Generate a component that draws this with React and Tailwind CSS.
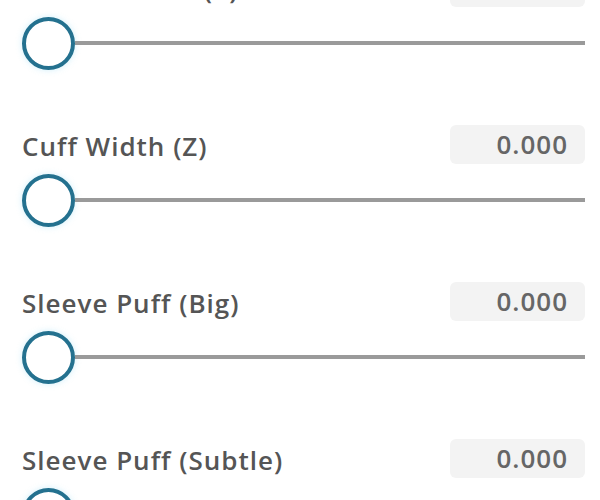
const fields = [
  { label: "Sleeve Width (Y)", value: 0 },
  { label: "Cuff Width (Z)", value: 0 },
  { label: "Sleeve Puff (Big)", value: 0 },
  { label: "Sleeve Puff (Subtle)", value: 0 },
];

function SliderRow({ label, value }) {
  return (
    <div className="mb-[56px]">
      <div className="flex items-center justify-between h-[39px]">
        <span className="text-[26px] font-semibold tracking-[1px] text-[#555555] pt-[4px]">{label}</span>
        <div className="w-[135px] h-[39px] rounded-[6px] bg-[#f3f3f3] flex items-center justify-end pr-[17px] text-[26px] font-semibold tracking-[1px] text-[#666666]">
          {value.toFixed(3)}
        </div>
      </div>
      {/* slider */}
      <div className="mt-[10px] flex items-center h-[52px]">
        <div className="w-[53px] h-[53px] shrink-0 rounded-full border-[4px] border-[#24718f] bg-white shadow-[0_0_6px_rgba(120,210,240,0.35)]" />
        <div className="flex-1 h-[4px] bg-[#9a9a9a]" />
      </div>
    </div>
  );
}

export default function App() {
  return (
    <div
      className="w-[600px] h-[500px] overflow-hidden bg-white"
      style={{ fontFamily: '"Open Sans", "Noto Sans", sans-serif' }}
    >
      <div className="-mt-[32px] pl-[22px] pr-[15px]">
        {fields.map((f) => (
          <SliderRow key={f.label} label={f.label} value={f.value} />
        ))}
      </div>
    </div>
  );
}
